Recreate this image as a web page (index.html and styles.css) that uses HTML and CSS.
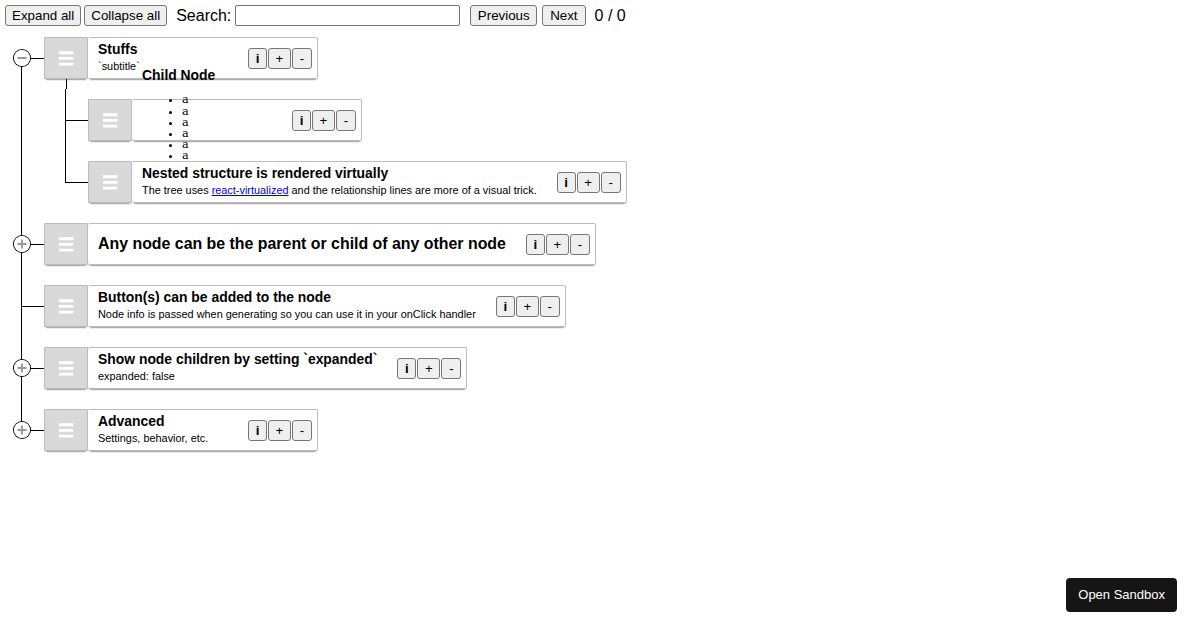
FILE: index.html
```html
<!DOCTYPE html>
<html lang="en">
<head>
<meta charset="utf-8">
<title>Sortable tree</title>
<link rel="stylesheet" href="styles.css">
</head>
<body>
<div class="topbar">
  <button class="btn">Expand all</button>
  <button class="btn">Collapse all</button>
  <label class="search">Search:<input class="search-input" type="text"></label>
  <button class="btn prev">Previous</button>
  <button class="btn next">Next</button>
  <span class="count">0 / 0</span>
</div>

<div class="tree">
  <!-- Stuffs -->
  <div class="row">
    <span class="line h-right v-bottom"></span>
    <div class="node">
      <button class="toggle" aria-label="Collapse"><svg width="18" height="18" viewBox="0 0 18 18"><circle cx="9" cy="9" r="8" fill="#fff"/><path d="M4.5 9h9" stroke="#989898" stroke-width="1.9"/></svg></button>
      <div class="handle has-kids"><svg width="42" height="40" viewBox="0 1 42 40"><path d="M14 15.7h14.4M14 21.4h14.4M14 27.1h14.4" stroke="#fff" stroke-width="2.9"/></svg></div>
      <div class="contents">
        <div class="label">
          <div class="title">Stuffs</div>
          <div class="subtitle"><span>`subtitle`</span></div>
        </div>
        <div class="actions"><button class="act act-i">i</button><button class="act act-plus">+</button><button class="act act-minus">-</button></div>
      </div>
    </div>
  </div>

  <!-- Child Node -->
  <div class="row">
    <span class="line v-full"></span>
    <span class="line h-right v-full"></span>
    <div class="node">
      <div class="handle"><svg width="42" height="40" viewBox="0 1 42 40"><path d="M14 15.7h14.4M14 21.4h14.4M14 27.1h14.4" stroke="#fff" stroke-width="2.9"/></svg></div>
      <div class="contents">
        <div class="label">
          <div class="title">Child Node</div>
          <div class="subtitle sub-list">
            <ul>
              <li>a</li><li>a</li><li>a</li><li>a</li><li>a</li><li>a</li>
            </ul>
          </div>
        </div>
        <div class="actions"><button class="act act-i">i</button><button class="act act-plus">+</button><button class="act act-minus">-</button></div>
      </div>
    </div>
  </div>

  <!-- Nested structure -->
  <div class="row">
    <span class="line v-full"></span>
    <span class="line h-right v-top"></span>
    <div class="node">
      <div class="handle"><svg width="42" height="40" viewBox="0 1 42 40"><path d="M14 15.7h14.4M14 21.4h14.4M14 27.1h14.4" stroke="#fff" stroke-width="2.9"/></svg></div>
      <div class="contents">
        <div class="label">
          <div class="title">Nested structure is rendered virtually</div>
          <div class="subtitle"><span>The tree uses <a href="#" class="link">react-virtualized</a> and the relationship lines are more of a visual trick.</span></div>
        </div>
        <div class="actions"><button class="act act-i">i</button><button class="act act-plus">+</button><button class="act act-minus">-</button></div>
      </div>
    </div>
  </div>

  <!-- Any node -->
  <div class="row">
    <span class="line h-right v-full"></span>
    <div class="node">
      <button class="toggle" aria-label="Expand"><svg width="18" height="18" viewBox="0 0 18 18"><circle cx="9" cy="9" r="8" fill="#fff"/><path d="M4.5 9h9M9 4.5v9" stroke="#989898" stroke-width="1.9"/></svg></button>
      <div class="handle"><svg width="42" height="40" viewBox="0 1 42 40"><path d="M14 15.7h14.4M14 21.4h14.4M14 27.1h14.4" stroke="#fff" stroke-width="2.9"/></svg></div>
      <div class="contents">
        <div class="label">
          <div class="title title-lg">Any node can be the parent or child of any other node</div>
        </div>
        <div class="actions"><button class="act act-i">i</button><button class="act act-plus">+</button><button class="act act-minus">-</button></div>
      </div>
    </div>
  </div>

  <!-- Buttons -->
  <div class="row">
    <span class="line h-right v-full"></span>
    <div class="node">
      <div class="handle"><svg width="42" height="40" viewBox="0 1 42 40"><path d="M14 15.7h14.4M14 21.4h14.4M14 27.1h14.4" stroke="#fff" stroke-width="2.9"/></svg></div>
      <div class="contents">
        <div class="label">
          <div class="title">Button(s) can be added to the node</div>
          <div class="subtitle"><span>Node info is passed when generating so you can use it in your onClick handler</span></div>
        </div>
        <div class="actions"><button class="act act-i">i</button><button class="act act-plus">+</button><button class="act act-minus">-</button></div>
      </div>
    </div>
  </div>

  <!-- Show node children -->
  <div class="row">
    <span class="line h-right v-full"></span>
    <div class="node">
      <button class="toggle" aria-label="Expand"><svg width="18" height="18" viewBox="0 0 18 18"><circle cx="9" cy="9" r="8" fill="#fff"/><path d="M4.5 9h9M9 4.5v9" stroke="#989898" stroke-width="1.9"/></svg></button>
      <div class="handle"><svg width="42" height="40" viewBox="0 1 42 40"><path d="M14 15.7h14.4M14 21.4h14.4M14 27.1h14.4" stroke="#fff" stroke-width="2.9"/></svg></div>
      <div class="contents">
        <div class="label">
          <div class="title">Show node children by setting `expanded`</div>
          <div class="subtitle"><span>expanded: false</span></div>
        </div>
        <div class="actions"><button class="act act-i">i</button><button class="act act-plus">+</button><button class="act act-minus">-</button></div>
      </div>
    </div>
  </div>

  <!-- Advanced -->
  <div class="row">
    <span class="line h-right v-top"></span>
    <div class="node">
      <button class="toggle" aria-label="Expand"><svg width="18" height="18" viewBox="0 0 18 18"><circle cx="9" cy="9" r="8" fill="#fff"/><path d="M4.5 9h9M9 4.5v9" stroke="#989898" stroke-width="1.9"/></svg></button>
      <div class="handle"><svg width="42" height="40" viewBox="0 1 42 40"><path d="M14 15.7h14.4M14 21.4h14.4M14 27.1h14.4" stroke="#fff" stroke-width="2.9"/></svg></div>
      <div class="contents">
        <div class="label">
          <div class="title">Advanced</div>
          <div class="subtitle"><span>Settings, behavior, etc.</span></div>
        </div>
        <div class="actions"><button class="act act-i">i</button><button class="act act-plus">+</button><button class="act act-minus">-</button></div>
      </div>
    </div>
  </div>
</div>

<button class="sandbox">Open Sandbox</button>
</body>
</html>
```
FILE: styles.css
```css
* {
  box-sizing: border-box;
}

body {
  margin: 0;
  font-family: "Liberation Sans", Arial, sans-serif;
  font-size: 16px;
  color: #000;
  background: #fff;
}

/* top bar */
.topbar {
  display: flex;
  align-items: center;
  height: 27px;
  padding: 5px 5px 1px;
}

.btn {
  height: 21px;
  padding: 0 6px;
  font-family: "Liberation Sans", Arial, sans-serif;
  font-size: 13.33px;
  color: #000;
  background: #efefef;
  border: 1px solid #767676;
  border-radius: 3px;
}

.btn + .btn {
  margin-left: 3px;
}

.search {
  display: flex;
  align-items: center;
  margin-left: 9px;
  font-size: 16px;
}

.search-input {
  width: 225px;
  height: 21px;
  margin: 0 0 0 4px;
  border: 1px solid #767676;
  border-radius: 2px;
  background: #fff;
}

.btn.prev {
  margin-left: 10px;
  padding: 0 6.5px;
}

.btn.next {
  margin-left: 5px;
  padding: 0 7px;
}

.count {
  margin-left: 9px;
  font-size: 16px;
}

/* tree */
.row {
  display: flex;
  height: 62px;
}

.line {
  position: relative;
  flex: none;
  width: 44px;
  height: 100%;
}

.line::before,
.line::after {
  position: absolute;
  background: #000;
}

.h-right::before {
  content: "";
  top: 31px;
  left: 22px;
  width: 22px;
  height: 1px;
}

.v-full::after {
  content: "";
  top: 0;
  left: 21px;
  width: 1px;
  height: 100%;
}

.v-top::after {
  content: "";
  top: 0;
  left: 21px;
  width: 1px;
  height: 32px;
}

.v-bottom::after {
  content: "";
  top: 31px;
  left: 21px;
  width: 1px;
  height: 31px;
}

.node {
  position: relative;
  display: flex;
  height: 100%;
  padding: 10px 10px 10px 0;
}

.toggle {
  position: absolute;
  left: -22px;
  top: 50%;
  z-index: 2;
  display: flex;
  align-items: center;
  justify-content: center;
  width: 16px;
  height: 16px;
  padding: 0;
  border: none;
  border-radius: 50%;
  background: #fff;
  box-shadow: 0 0 0 1px #000;
  overflow: hidden;
  transform: translate(-50%, -50%);
}

.toggle svg {
  flex: none;
}

.handle {
  position: relative;
  z-index: 1;
  flex: none;
  display: flex;
  align-items: center;
  justify-content: center;
  width: 44px;
  height: 42px;
  background: #d9d9d9;
  border: 1px solid #bbb;
  border-radius: 1px;
  box-shadow: 0 2px 2px -2px #000;
}

.handle svg {
  flex: none;
}

.has-kids::after {
  content: "";
  position: absolute;
  left: 21px;
  top: calc(100% + 1px);
  width: 1px;
  height: 10px;
  background: #000;
}

.contents {
  display: flex;
  align-items: center;
  justify-content: space-between;
  flex: 1 0 auto;
  min-width: 230px;
  height: 42px;
  padding: 0 5px 0 10px;
  background: #fff;
  border: 1px solid #bbb;
  border-left: none;
  border-radius: 2px;
  box-shadow: 0 2px 2px -2px #000;
}

.label {
  flex: 0 1 auto;
  padding-right: 20px;
}

.title {
  font-size: 13.9px;
  font-weight: bold;
}

.title-lg {
  font-size: 15.9px;
}

.subtitle > span {
  font-size: 10.9px;
  line-height: 1;
  vertical-align: 1px;
}

.sub-list ul {
  margin: 11.2px 0;
  padding-left: 40px;
  font-family: "DejaVu Serif", "Liberation Serif", serif;
  font-size: 11.2px;
  line-height: 11.2px;
}

.link {
  color: #0000ee;
  text-decoration: underline;
}

.actions {
  display: flex;
  gap: 1px;
  flex: none;
}

.act {
  height: 21px;
  padding: 0;
  font-family: "Liberation Sans", Arial, sans-serif;
  font-size: 13.33px;
  color: #000;
  background: #efefef;
  border: 1px solid #767676;
  border-radius: 3px;
}

.act-i {
  width: 19px;
  font-weight: bold;
}

.act-plus {
  width: 23px;
}

.act-minus {
  width: 20px;
}

/* floating button */
.sandbox {
  position: fixed;
  right: 23px;
  bottom: 18px;
  height: 34px;
  padding: 0 12px 2px;
  font-family: "Liberation Sans", Arial, sans-serif;
  font-size: 13px;
  color: #fff;
  background: #151515;
  border: none;
  border-radius: 4px;
}
```
